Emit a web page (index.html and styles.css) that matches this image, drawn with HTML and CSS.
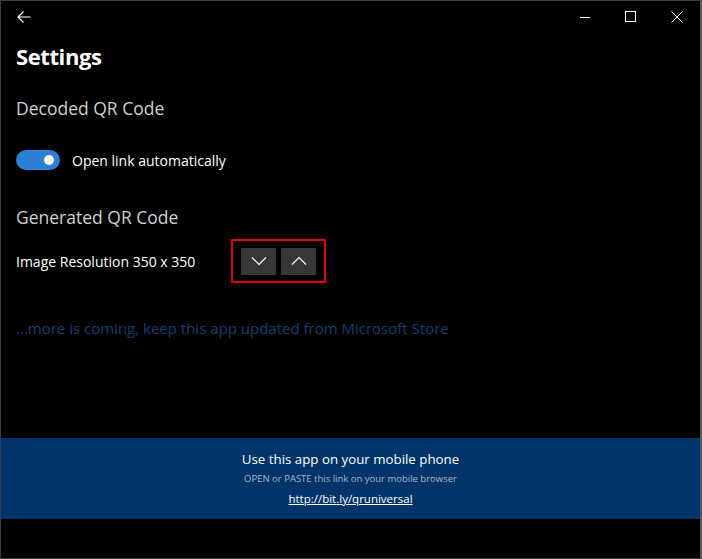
FILE: index.html
```html
<!DOCTYPE html>
<html>
<head>
<meta charset="utf-8">
<link rel="stylesheet" href="styles.css">
</head>
<body>
<div class="window">
  <div class="titlebar">
    <div class="back">
      <svg width="14" height="12" viewBox="0 0 14 12"><path d="M13.5 6H1M6.5 0.5L1 6l5.5 5.5" fill="none" stroke="#fff" stroke-width="1.1"/></svg>
    </div>
    <div class="spacer"></div>
    <div class="wbtn"><svg width="12" height="12" viewBox="0 0 12 12"><path d="M1 6.5h10" stroke="#fff" stroke-width="1"/></svg></div>
    <div class="wbtn"><svg width="12" height="12" viewBox="0 0 12 12"><rect x="0.5" y="0.5" width="10" height="10" fill="none" stroke="#fff" stroke-width="1"/></svg></div>
    <div class="wbtn"><svg width="12" height="12" viewBox="0 0 12 12"><path d="M0.5 0.5l11 11M11.5 0.5l-11 11" stroke="#fff" stroke-width="1"/></svg></div>
  </div>
  <main class="content">
    <h1 class="title">Settings</h1>
    <h2 class="section">Decoded QR Code</h2>
    <div class="row toggle-row">
      <div class="toggle"><div class="knob"></div></div>
      <span class="label">Open link automatically</span>
    </div>
    <h2 class="section gen">Generated QR Code</h2>
    <div class="row res-row">
      <span class="label">Image Resolution 350 x 350</span>
      <div class="highlight">
        <div class="stepbtn"><svg width="16" height="10" viewBox="0 0 16 10"><path d="M1 1.5l7 7 7-7" fill="none" stroke="#fff" stroke-width="1.1"/></svg></div>
        <div class="stepbtn"><svg width="16" height="10" viewBox="0 0 16 10"><path d="M1 8.5l7-7 7 7" fill="none" stroke="#fff" stroke-width="1.1"/></svg></div>
      </div>
    </div>
    <p class="more">...more is coming, keep this app updated from Microsoft Store</p>
  </main>
  <footer class="footer">
    <div class="f1">Use this app on your mobile phone</div>
    <div class="f2">OPEN or PASTE this link on your mobile browser</div>
    <a class="f3" href="#">http://bit.ly/qruniversal</a>
  </footer>
  <div class="bottom"></div>
</div>
</body>
</html>
```
FILE: styles.css
```css
html, body {
  margin: 0;
  padding: 0;
  background: #000;
}
body {
  width: 702px;
  height: 559px;
  overflow: hidden;
  font-family: "Open Sans", "Noto Sans", sans-serif;
  color: #fff;
}
.window {
  box-sizing: border-box;
  width: 702px;
  height: 559px;
  border: 1px solid #3c3c3c;
  border-right: 2px solid #5a5a5a;
  display: flex;
  flex-direction: column;
  background: #000;
}
.titlebar {
  height: 31px;
  display: flex;
  align-items: center;
  flex-shrink: 0;
}
.back {
  width: 48px;
  padding-left: 16px;
  box-sizing: border-box;
  display: flex;
  align-items: center;
  height: 31px;
}
.spacer { flex: 1; }
.wbtn {
  width: 46px;
  height: 31px;
  display: flex;
  align-items: center;
  justify-content: center;
}
.content {
  padding: 0 15px;
  flex: 1;
}
.title {
  margin: 8px 0 0;
  font-size: 22px;
  font-weight: 700;
  line-height: 32px;
  letter-spacing: -0.4px;
}
.section {
  margin: 23px 0 0;
  font-size: 17.5px;
  font-weight: 400;
  color: #cfcfcf;
  line-height: 26px;
}
.row {
  display: flex;
  align-items: center;
}
.toggle-row {
  margin-top: 29px;
  height: 20px;
}
.toggle {
  width: 44px;
  height: 20px;
  border-radius: 10px;
  background: #2b7fd4;
  position: relative;
  margin-right: 12px;
  flex-shrink: 0;
}
.knob {
  position: absolute;
  width: 10px;
  height: 10px;
  border-radius: 50%;
  background: #fff;
  top: 5px;
  right: 6px;
}
.label {
  font-size: 14px;
  color: #fff;
}
.section.gen {
  margin-top: 34px;
}
.res-row {
  margin-top: 9px;
}
.res-row .label {
  width: 215px;
}
.highlight {
  border: 2px solid #e60000;
  width: 95px;
  height: 44px;
  box-sizing: border-box;
  display: flex;
  align-items: center;
  padding-left: 8px;
  gap: 5px;
}
.stepbtn {
  width: 35px;
  height: 27px;
  background: #383838;
  display: flex;
  align-items: center;
  justify-content: center;
}
.more {
  margin: 35px 0 0;
  font-size: 15px;
  color: #163f70;
}
.footer {
  height: 81px;
  background: #00346a;
  display: flex;
  flex-direction: column;
  align-items: center;
  flex-shrink: 0;
}
.f1 {
  margin-top: 12px;
  font-size: 13.3px;
  line-height: 18px;
}
.f2 {
  margin-top: 4px;
  font-size: 9.5px;
  color: #a9b6c6;
  line-height: 13px;
}
.f3 {
  margin-top: 6px;
  font-size: 11.5px;
  color: #fff;
  line-height: 15px;
}
.bottom {
  height: 39px;
  flex-shrink: 0;
}
```
